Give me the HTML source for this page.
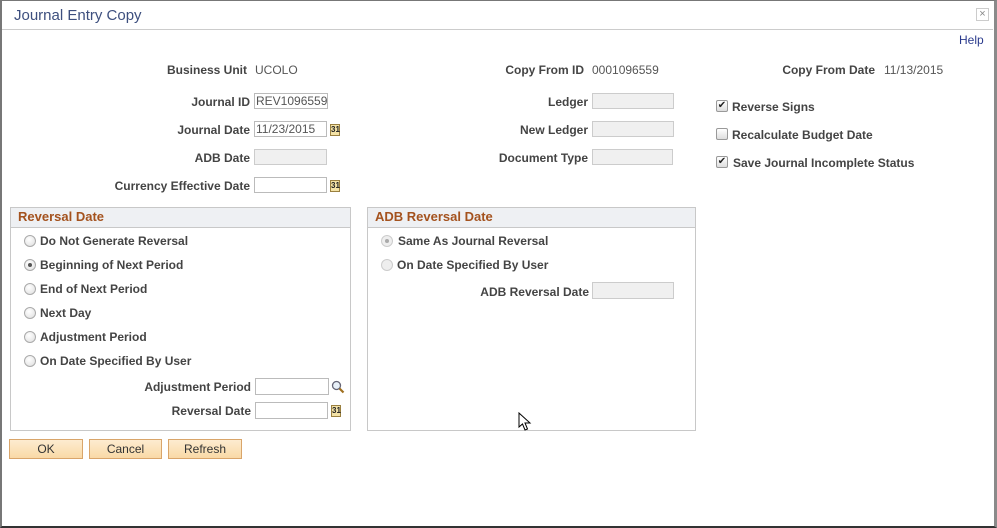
<!DOCTYPE html>
<html><head><style>
body{margin:0;width:997px;height:528px;overflow:hidden;background:#fff;font-family:"Liberation Sans",Arial,sans-serif;position:relative}
.a{position:absolute;white-space:nowrap;line-height:14px}
.l{font-size:12px;font-weight:bold;color:#444;text-align:right}
.v{font-size:12px;color:#555}
.in{position:absolute;height:16px;border:1px solid #bbb;background:#fff;box-sizing:border-box;font-size:12px;color:#555;line-height:14px;padding-left:1px;overflow:hidden}
.dis{background:#f0f0f0;border-color:#ccc}
.cal{position:absolute;width:10px;height:12px;background:#f3e2a6;border:1px solid #9a8040;font-size:8px;font-weight:bold;line-height:10px;text-align:center;color:#222;box-sizing:border-box}
.rad{position:absolute;width:12px;height:12px;border-radius:50%;border:1px solid #aaa;background:radial-gradient(circle at 40% 35%,#fff,#ddd);box-sizing:border-box}
.rad.on::after{content:"";position:absolute;left:3px;top:3px;width:4px;height:4px;border-radius:50%;background:#555}
.rad.dis2{border-color:#ccc;background:#eee}
.rad.dis2.on::after{background:#aaa}
.cb{position:absolute;width:12px;height:12px;border:1px solid #999;border-radius:2px;background:linear-gradient(#fff,#ddd);box-sizing:border-box;font-size:10px;line-height:10px;text-align:center;color:#222}
.box{position:absolute;border:1px solid #c8c8c8;box-sizing:border-box}
.bh{height:19px;background:#eef0f3;border-bottom:1px solid #c8c8c8;color:#a4521e;font-size:13px;font-weight:bold;padding-left:7px;line-height:18px}
.btn{position:absolute;top:439px;height:20px;border:1px solid #d9a56a;background:linear-gradient(#fdecd0,#f9d9a6);box-sizing:border-box;font-size:12px;color:#333;text-align:center;line-height:18px}
</style></head><body>
<div style="position:absolute;left:0;top:0;width:997px;height:528px;border-left:2px solid #777;border-right:3px solid #8a8a8a;border-top:1px solid #777;border-bottom:2px solid #333;box-sizing:border-box"></div>
<div class="a" style="left:14px;top:7px;font-size:15px;line-height:17px;color:#3d4f7e">Journal Entry Copy</div>
<div style="position:absolute;left:976px;top:8px;width:13px;height:13px;border:1px solid #ccc;box-sizing:border-box;font-size:11px;line-height:11px;text-align:center;color:#888">×</div>
<div style="position:absolute;left:2px;top:29px;width:991px;height:1px;background:#ccc"></div>
<div class="a" style="left:959px;top:33px;font-size:12px;color:#2a3a8c">Help</div>

<div class="a l" style="right:750px;top:63px">Business Unit</div>
<div class="a v" style="left:255px;top:63px">UCOLO</div>
<div class="a l" style="right:413px;top:63px">Copy From ID</div>
<div class="a v" style="left:592px;top:63px">0001096559</div>
<div class="a l" style="right:122px;top:63px">Copy From Date</div>
<div class="a v" style="left:884px;top:63px">11/13/2015</div>

<div class="a l" style="right:747px;top:95px">Journal ID</div>
<div class="in" style="left:254px;top:93px;width:74px">REV1096559</div>
<div class="a l" style="right:747px;top:123px">Journal Date</div>
<div class="in" style="left:254px;top:121px;width:73px">11/23/2015</div>
<div class="cal" style="left:330px;top:124px">31</div>
<div class="a l" style="right:747px;top:151px">ADB Date</div>
<div class="in dis" style="left:254px;top:149px;width:73px"></div>
<div class="a l" style="right:747px;top:179px">Currency Effective Date</div>
<div class="in" style="left:254px;top:177px;width:73px"></div>
<div class="cal" style="left:330px;top:180px">31</div>

<div class="a l" style="right:409px;top:95px">Ledger</div>
<div class="in dis" style="left:592px;top:93px;width:82px"></div>
<div class="a l" style="right:409px;top:123px">New Ledger</div>
<div class="in dis" style="left:592px;top:121px;width:82px"></div>
<div class="a l" style="right:409px;top:151px">Document Type</div>
<div class="in dis" style="left:592px;top:149px;width:81px"></div>

<div class="cb" style="left:716px;top:100px">✔</div>
<div class="a l" style="left:732px;top:100px;text-align:left">Reverse Signs</div>
<div class="cb" style="left:716px;top:128px"></div>
<div class="a l" style="left:732px;top:128px;text-align:left">Recalculate Budget Date</div>
<div class="cb" style="left:716px;top:156px">✔</div>
<div class="a l" style="left:733px;top:156px;text-align:left">Save Journal Incomplete Status</div>

<div class="box" style="left:10px;top:207px;width:341px;height:224px"><div class="bh">Reversal Date</div></div>
<div class="rad" style="left:24px;top:235px"></div><div class="a l" style="left:40px;top:234px">Do Not Generate Reversal</div>
<div class="rad on" style="left:24px;top:259px"></div><div class="a l" style="left:40px;top:258px">Beginning of Next Period</div>
<div class="rad" style="left:24px;top:283px"></div><div class="a l" style="left:40px;top:282px">End of Next Period</div>
<div class="rad" style="left:24px;top:307px"></div><div class="a l" style="left:40px;top:306px">Next Day</div>
<div class="rad" style="left:24px;top:331px"></div><div class="a l" style="left:40px;top:330px">Adjustment Period</div>
<div class="rad" style="left:24px;top:355px"></div><div class="a l" style="left:40px;top:354px">On Date Specified By User</div>
<div class="a l" style="right:746px;top:380px">Adjustment Period</div>
<div class="in" style="left:255px;top:378px;width:74px;height:17px"></div>
<svg style="position:absolute;left:331px;top:380px" width="14" height="14"><circle cx="5.5" cy="5.5" r="4" fill="#e8f0f8" stroke="#667" stroke-width="1.3"/><line x1="8.5" y1="8.5" x2="12.5" y2="12.5" stroke="#a07020" stroke-width="2.2"/></svg>
<div class="a l" style="right:746px;top:404px">Reversal Date</div>
<div class="in" style="left:255px;top:402px;width:73px;height:17px"></div>
<div class="cal" style="left:331px;top:405px">31</div>

<div class="box" style="left:367px;top:207px;width:329px;height:224px"><div class="bh">ADB Reversal Date</div></div>
<div class="rad dis2 on" style="left:381px;top:235px"></div><div class="a l" style="left:398px;top:234px">Same As Journal Reversal</div>
<div class="rad dis2" style="left:381px;top:259px"></div><div class="a l" style="left:397px;top:258px">On Date Specified By User</div>
<div class="a l" style="right:408px;top:285px">ADB Reversal Date</div>
<div class="in dis" style="left:592px;top:282px;width:82px;height:17px"></div>
<svg style="position:absolute;left:518px;top:412px" width="14" height="20"><path d="M1 1 L1 15 L4.5 12 L7 18 L9.5 17 L7 11 L12 11 Z" fill="#fff" stroke="#000" stroke-width="1"/></svg>

<div class="btn" style="left:9px;width:74px">OK</div>
<div class="btn" style="left:89px;width:73px">Cancel</div>
<div class="btn" style="left:168px;width:74px">Refresh</div>
</body></html>
